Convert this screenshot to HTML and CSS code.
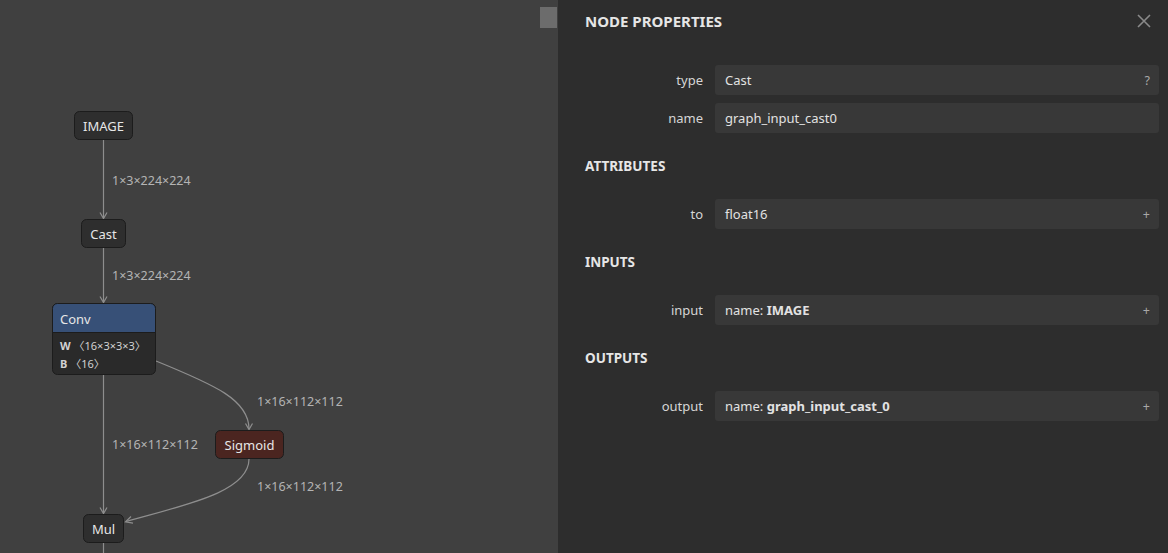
FILE: index.html
```html
<!DOCTYPE html>
<html>
<head>
<meta charset="utf-8">
<link rel="stylesheet" href="styles.css">
</head>
<body>
<div class="app">
  <div class="canvas">
    <svg class="graph" width="558" height="553" viewBox="0 0 558 553">
      <g class="edges">
        <path d="M103.5 140 V218"/>
        <path class="arrow" d="M100 212.5 L103.5 218.5 L107 212.5"/>
        <path d="M103.5 248 V302"/>
        <path class="arrow" d="M100 296.5 L103.5 302.5 L107 296.5"/>
        <path d="M103.5 375 V513"/>
        <path class="arrow" d="M100 507.5 L103.5 513.5 L107 507.5"/>
        <path d="M103.5 543 V553"/>
        <path d="M156 361 C 215 385, 249 400, 249 429"/>
        <path class="arrow" d="M245.5 423.5 L249 429.5 L252.5 423.5"/>
        <path d="M249 459 C 249 492, 185 505, 126 521.5"/>
        <path class="arrow" d="M131 516.5 L125.5 521.8 L133 523.2"/>
      </g>
      <g class="labels">
        <text x="112" y="184.5">1×3×224×224</text>
        <text x="112" y="279.5">1×3×224×224</text>
        <text x="257" y="405.5">1×16×112×112</text>
        <text x="112" y="448.5">1×16×112×112</text>
        <text x="257" y="490.5">1×16×112×112</text>
      </g>
      <g class="node">
        <rect x="74.5" y="111.5" width="58" height="28" rx="5"/>
        <text x="103.5" y="130.5" text-anchor="middle">IMAGE</text>
      </g>
      <g class="node">
        <rect x="81.5" y="219.5" width="44" height="28" rx="5"/>
        <text x="103.5" y="239" text-anchor="middle">Cast</text>
      </g>
      <g class="node conv">
        <rect class="body" x="52.5" y="303.5" width="103" height="71" rx="5"/>
        <path class="head" d="M52.5 332.5 V308.5 A5 5 0 0 1 57.5 303.5 H150.5 A5 5 0 0 1 155.5 308.5 V332.5 Z"/>
        <line class="sep" x1="52.5" y1="332.5" x2="155.5" y2="332.5"/>
        <text x="60" y="324">Conv</text>
        <text class="attr" x="60" y="349.5"><tspan class="b">W</tspan> 〈16×3×3×3〉</text>
        <text class="attr" x="60" y="367.5"><tspan class="b">B</tspan> 〈16〉</text>
      </g>
      <g class="node sig">
        <rect x="215.5" y="430.5" width="68" height="28" rx="5"/>
        <text x="249.5" y="450" text-anchor="middle">Sigmoid</text>
      </g>
      <g class="node">
        <rect x="83.5" y="514.5" width="40" height="28" rx="5"/>
        <text x="103.5" y="534" text-anchor="middle">Mul</text>
      </g>
    </svg>
    <div class="thumb"></div>
  </div>
  <div class="panel">
    <div class="title-row">
      <div class="title">NODE PROPERTIES</div>
      <svg class="close" width="16" height="16" viewBox="0 0 16 16"><path d="M2 2 L14 14 M14 2 L2 14"/></svg>
    </div>
    <div class="section first">
      <div class="row"><div class="label">type</div><div class="value">Cast<span class="tag">?</span></div></div>
      <div class="row"><div class="label">name</div><div class="value">graph_input_cast0</div></div>
    </div>
    <div class="heading">ATTRIBUTES</div>
    <div class="section">
      <div class="row"><div class="label">to</div><div class="value">float16<span class="tag">+</span></div></div>
    </div>
    <div class="heading">INPUTS</div>
    <div class="section">
      <div class="row"><div class="label">input</div><div class="value">name: <b>IMAGE</b><span class="tag">+</span></div></div>
    </div>
    <div class="heading">OUTPUTS</div>
    <div class="section">
      <div class="row"><div class="label">output</div><div class="value">name: <b>graph_input_cast_0</b><span class="tag">+</span></div></div>
    </div>
  </div>
</div>
</body>
</html>
```

FILE: styles.css
```css
html, body {
  margin: 0;
  padding: 0;
  width: 1168px;
  height: 553px;
  overflow: hidden;
  font-family: "Noto Sans", "Open Sans", "Noto Sans CJK SC", sans-serif;
}
.app {
  display: flex;
  width: 1168px;
  height: 553px;
}
.canvas {
  position: relative;
  width: 558px;
  height: 553px;
  background: #404040;
  flex: none;
}
.graph {
  display: block;
}
.graph .edges path {
  fill: none;
  stroke: #8e8e8e;
  stroke-width: 1.2;
}
.graph .labels text {
  font-size: 12.5px;
  fill: #b4b4b4;
}
.node rect {
  fill: #2e2e2e;
  stroke: #1c1c1c;
  stroke-width: 1;
}
.node text {
  font-size: 13px;
  fill: #e6e6e6;
}
.node.conv .body {
  fill: #2a2a2a;
}
.node.conv .head {
  fill: #375077;
  stroke: #1c1c1c;
}
.node.conv .sep {
  stroke: #1c1c1c;
}
.node.conv .attr {
  font-size: 11px;
  fill: #d2d2d2;
}
.node.conv .attr .b {
  font-weight: bold;
}
.node.sig rect {
  fill: #4b2520;
}
.thumb {
  position: absolute;
  left: 540px;
  top: 7px;
  width: 17px;
  height: 21px;
  background: #6c6c6c;
}
.panel {
  flex: 1;
  background: #2d2d2d;
  color: #e2e2e2;
  padding: 0 9px 0 27px;
  box-sizing: border-box;
}
.title-row {
  height: 42px;
  display: flex;
  align-items: center;
  justify-content: space-between;
  padding-right: 7px;
}
.title {
  font-size: 15px;
  font-weight: bold;
  color: #e6e6e6;
}
.close path {
  stroke: #8a8a8a;
  stroke-width: 1.6;
}
.section {
  display: flex;
  flex-direction: column;
  gap: 8px;
}
.section.first {
  margin-top: 23px;
}
.heading {
  height: 66px;
  line-height: 66px;
  font-size: 13.5px;
  font-weight: bold;
  color: #e6e6e6;
}
.row {
  display: flex;
  align-items: center;
  gap: 12px;
  height: 30px;
}
.label {
  width: 118px;
  text-align: right;
  font-size: 13px;
  color: #d6d6d6;
}
.value {
  flex: 1;
  height: 30px;
  line-height: 31px;
  background: #383838;
  border-radius: 3px;
  padding-left: 10px;
  font-size: 13px;
  color: #e2e2e2;
  position: relative;
}
.value b {
  font-weight: bold;
}
.tag {
  position: absolute;
  right: 9px;
  top: 0;
  font-size: 12.5px;
  color: #a8a8a8;
}
```
